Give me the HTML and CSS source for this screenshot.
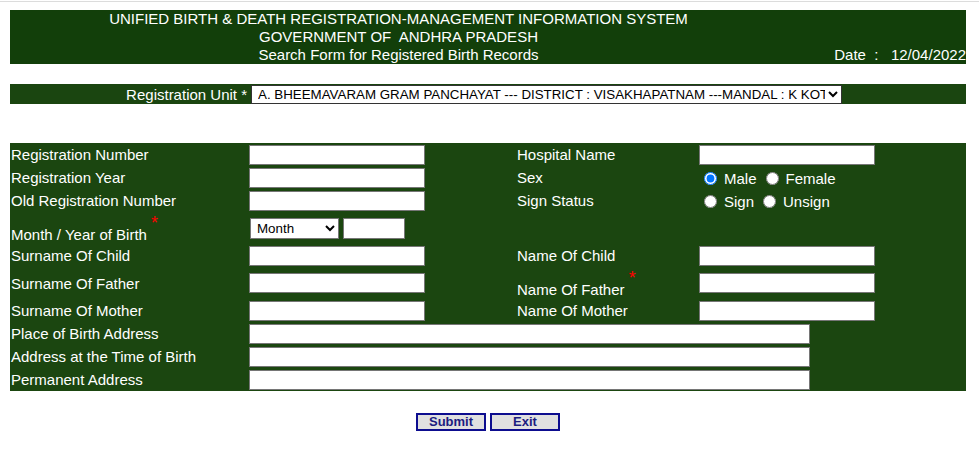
FILE: index.html
```html
<!DOCTYPE html>
<html>
<head>
<meta charset="utf-8">
<title>Search Form for Registered Birth Records</title>
<link rel="stylesheet" href="styles.css">
</head>
<body>
<div class="topline"></div>
<div class="page">
  <div class="header">
    <div class="h-title">UNIFIED BIRTH &amp; DEATH REGISTRATION-MANAGEMENT INFORMATION SYSTEM</div>
    <div></div>
    <div class="h-title">GOVERNMENT OF&nbsp; ANDHRA PRADESH</div>
    <div></div>
    <div class="h-title">Search Form for Registered Birth Records</div>
    <div class="h-date">Date&nbsp;&nbsp;:&nbsp;&nbsp;&nbsp;12/04/2022</div>
  </div>

  <div class="unitbar">
    <div class="unit-label">Registration Unit *</div>
    <select class="unit-select">
      <option>A. BHEEMAVARAM GRAM PANCHAYAT --- DISTRICT : VISAKHAPATNAM ---MANDAL : K KOTA</option>
    </select>
  </div>

  <form class="form">
    <div class="lbl">Registration Number</div>
    <div class="fld"><input class="txt" type="text"></div>
    <div class="lbl lbl-r">Hospital Name</div>
    <div class="fld"><input class="txt" type="text"></div>

    <div class="lbl">Registration Year</div>
    <div class="fld"><input class="txt" type="text"></div>
    <div class="lbl lbl-r">Sex</div>
    <div class="fld radios">
      <input type="radio" name="sex" checked><span class="rtext">Male</span>
      <input type="radio" name="sex"><span class="rtext">Female</span>
    </div>

    <div class="lbl">Old Registration Number</div>
    <div class="fld"><input class="txt" type="text"></div>
    <div class="lbl lbl-r">Sign Status</div>
    <div class="fld radios">
      <input type="radio" name="sign"><span class="rtext">Sign</span>
      <input type="radio" name="sign"><span class="rtext">Unsign</span>
    </div>

    <div class="lbl lbl-req">Month / Year of Birth <span class="req">*</span></div>
    <div class="fld monthyear">
      <select class="month"><option>Month</option></select>
      <input class="year" type="text">
    </div>
    <div class="lbl lbl-r"></div>
    <div class="fld"></div>

    <div class="lbl">Surname Of Child</div>
    <div class="fld"><input class="txt" type="text"></div>
    <div class="lbl lbl-r">Name Of Child</div>
    <div class="fld"><input class="txt" type="text"></div>

    <div class="lbl">Surname Of Father</div>
    <div class="fld"><input class="txt" type="text"></div>
    <div class="lbl lbl-r lbl-req">Name Of Father <span class="req">*</span></div>
    <div class="fld"><input class="txt" type="text"></div>

    <div class="lbl">Surname Of Mother</div>
    <div class="fld"><input class="txt" type="text"></div>
    <div class="lbl lbl-r">Name Of Mother</div>
    <div class="fld"><input class="txt" type="text"></div>

    <div class="lbl">Place of Birth Address</div>
    <div class="fld wide"><input class="txt long" type="text"></div>

    <div class="lbl">Address at the Time of Birth</div>
    <div class="fld wide"><input class="txt long" type="text"></div>

    <div class="lbl">Permanent Address</div>
    <div class="fld wide"><input class="txt long" type="text"></div>
  </form>

  <div class="actions">
    <button class="btn" type="button">Submit</button>
    <button class="btn" type="button">Exit</button>
  </div>
</div>
</body>
</html>
```

FILE: styles.css
```css
html, body {
  margin: 0;
  padding: 0;
  background: #ffffff;
}

body {
  font-family: "Liberation Sans", Arial, sans-serif;
  font-size: 15px;
  color: #ffffff;
}

.topline {
  height: 1px;
  margin-top: 1px;
  background: #dcdcdc;
}

.page {
  margin-left: 10px;
  width: 956px;
  padding-top: 8px;
}

/* Header */
.header {
  background: #123f0a;
  display: grid;
  grid-template-columns: 777px 1fr;
  grid-auto-rows: 18px;
  line-height: 18px;
}

.h-title {
  text-align: center;
  white-space: nowrap;
}

.h-date {
  text-align: right;
  white-space: nowrap;
}

/* Registration unit bar */
.unitbar {
  margin-top: 20px;
  height: 20px;
  background: #1a4510;
  display: flex;
  align-items: center;
}

.unit-label {
  width: 237px;
  text-align: right;
  white-space: nowrap;
  line-height: 17px;
}

.unit-select {
  margin: 0 0 0 4px;
  width: 591px;
  height: 19px;
  box-sizing: border-box;
  font-family: "Liberation Sans", Arial, sans-serif;
  font-size: 13.33px;
  color: #000;
  background: #fff;
  border: 1px solid #333;
  border-radius: 0;
  padding: 0 0 1px 2px;
}

/* Form */
.form {
  margin: 39px 0 0 0;
  background: #1b4610;
  display: grid;
  grid-template-columns: 239px 268px 182px 1fr;
  grid-template-rows: 23px 23px 23px 32px 23px 32px 23px 23px 23px 23px;
}

.lbl {
  padding-left: 1px;
  padding-top: 0;
  align-self: center;
  white-space: nowrap;
  line-height: 17px;
}

.lbl-r {
  padding-left: 0;
}

.lbl-req {
  align-self: end;
  padding-top: 0;
  padding-bottom: 1px;
}

.req {
  color: #ff0000;
  font-size: 18px;
  vertical-align: 11px;
  line-height: 12px;
}

.fld {
  align-self: center;
  display: flex;
  align-items: center;
}

.wide {
  grid-column: 2 / 5;
}

.txt {
  width: 176px;
  height: 20px;
  box-sizing: border-box;
  margin: 0;
  padding: 1px 2px;
  border: 1px solid #767676;
  background: #fff;
  font-family: "Liberation Sans", Arial, sans-serif;
  font-size: 13.33px;
}

.txt.long {
  width: 561px;
}

.radios {
  line-height: 17px;
  padding-top: 1px;
}

.radios input {
  width: 13px;
  height: 13px;
  margin: 0 3px 0 5px;
}

.rtext {
  padding-left: 4px;
  padding-right: 4px;
}

.monthyear {
  gap: 4px;
}

.month {
  margin: 0 0 0 1px;
  width: 89px;
  height: 21px;
  box-sizing: border-box;
  font-family: "Liberation Sans", Arial, sans-serif;
  font-size: 13.33px;
  color: #000;
  background: #fff;
  border: 1px solid #767676;
  border-radius: 0;
  padding: 0 0 0 2px;
}

.year {
  width: 62px;
  height: 21px;
  box-sizing: border-box;
  margin: 0;
  border: 1px solid #767676;
  background: #fff;
}

/* Buttons */
.actions {
  margin-top: 22px;
  display: flex;
  justify-content: center;
  gap: 4px;
}

.btn {
  width: 70px;
  height: 18px;
  box-sizing: border-box;
  margin: 0;
  padding: 0;
  background: #e0e0e0;
  border: 2px solid #0d0d8f;
  border-radius: 0;
  color: #1c1c80;
  font-family: "Liberation Sans", Arial, sans-serif;
  font-weight: bold;
  font-size: 13px;
  line-height: 14px;
}
```
